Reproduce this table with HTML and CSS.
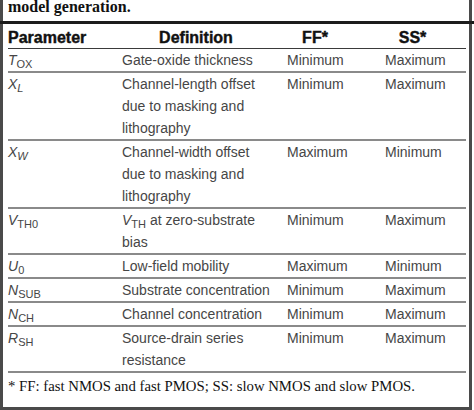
FILE: index.html
```html
<!DOCTYPE html>
<html>
<head>
<meta charset="utf-8">
<link rel="stylesheet" href="styles.css">
</head>
<body>
<div class="frame">
  <p class="caption">model generation.</p>
  <div class="rule"></div>
  <table class="params">
    <colgroup>
      <col class="w-param"><col class="w-def"><col class="w-ff"><col class="w-ss">
    </colgroup>
    <thead>
      <tr>
        <th class="h-param">Parameter</th>
        <th class="h-def">Definition</th>
        <th class="h-ff">FF*</th>
        <th class="h-ss">SS*</th>
      </tr>
    </thead>
    <tbody>
      <tr><td><span class="sym">T</span><span class="sub">OX</span></td><td>Gate-oxide thickness</td><td>Minimum</td><td>Maximum</td></tr>
      <tr><td><span class="sym">X</span><span class="sub it">L</span></td><td>Channel-length offset<br>due to masking and<br>lithography</td><td>Minimum</td><td>Maximum</td></tr>
      <tr><td><span class="sym">X</span><span class="sub it">W</span></td><td>Channel-width offset<br>due to masking and<br>lithography</td><td>Maximum</td><td>Minimum</td></tr>
      <tr><td><span class="sym">V</span><span class="sub">TH0</span></td><td><span class="sym">V</span><span class="sub">TH</span> at zero-substrate<br>bias</td><td>Minimum</td><td>Maximum</td></tr>
      <tr><td><span class="sym">U</span><span class="sub">0</span></td><td>Low-field mobility</td><td>Maximum</td><td>Minimum</td></tr>
      <tr><td><span class="sym">N</span><span class="sub">SUB</span></td><td>Substrate concentration</td><td>Minimum</td><td>Maximum</td></tr>
      <tr><td><span class="sym">N</span><span class="sub">CH</span></td><td>Channel concentration</td><td>Minimum</td><td>Maximum</td></tr>
      <tr><td><span class="sym">R</span><span class="sub">SH</span></td><td>Source-drain series<br>resistance</td><td>Minimum</td><td>Maximum</td></tr>
    </tbody>
  </table>
  <p class="note">* FF: fast NMOS and fast PMOS; SS: slow NMOS and slow PMOS.</p>
</div>
</body>
</html>
```
FILE: styles.css
```css
html, body {
  margin: 0;
  padding: 0;
  background: #ffffff;
}

.frame {
  box-sizing: border-box;
  width: 472px;
  height: 410px;
  border-left: 3px solid #4a4a4a;
  border-right: 3px solid #4a4a4a;
  border-bottom: 3px solid #4a4a4a;
}

.caption {
  margin: 0;
  height: 21px;
  padding-left: 5px;
  font-family: "Liberation Serif", serif;
  font-weight: bold;
  font-size: 16px;
  line-height: 13px;
  color: #111;
}

.rule {
  margin-left: -3px;
  width: 474px;
  height: 3px;
  background: #1c1c1c;
}

.params {
  margin-left: 5px;
  width: 458px;
  border-collapse: collapse;
  table-layout: fixed;
  font-family: "Liberation Sans", Arial, sans-serif;
  font-size: 14px;
  color: #464646;
}

.w-param { width: 114px; }
.w-def { width: 165px; }
.w-ff { width: 98px; }
.w-ss { width: 81px; }

.params th {
  padding: 4px 0 0 0;
  height: 20px;
  line-height: 20px;
  font-size: 16px;
  font-weight: bold;
  color: #111;
  -webkit-text-stroke: 0.4px #111;
  border-bottom: 1px solid #3a3a3a;
  text-align: center;
  vertical-align: top;
}

.params th.h-param { text-align: left; }
.params th.h-def { padding-right: 17px; }
.params th.h-ff { padding-right: 42px; }
.params th.h-ss { padding-right: 26px; }

.params td {
  padding: 0;
  line-height: 22px;
  vertical-align: top;
  border-bottom: 2px solid #8a8a8a;
  white-space: nowrap;
}

.sym {
  font-style: italic;
}

.sub {
  font-size: 11px;
  line-height: 0;
  vertical-align: -3px;
}

.sub.it {
  font-style: italic;
}

.note {
  margin: 0;
  padding: 3px 0 0 5px;
  font-family: "Liberation Serif", serif;
  font-size: 14.75px;
  line-height: 20px;
  color: #111;
}
```
